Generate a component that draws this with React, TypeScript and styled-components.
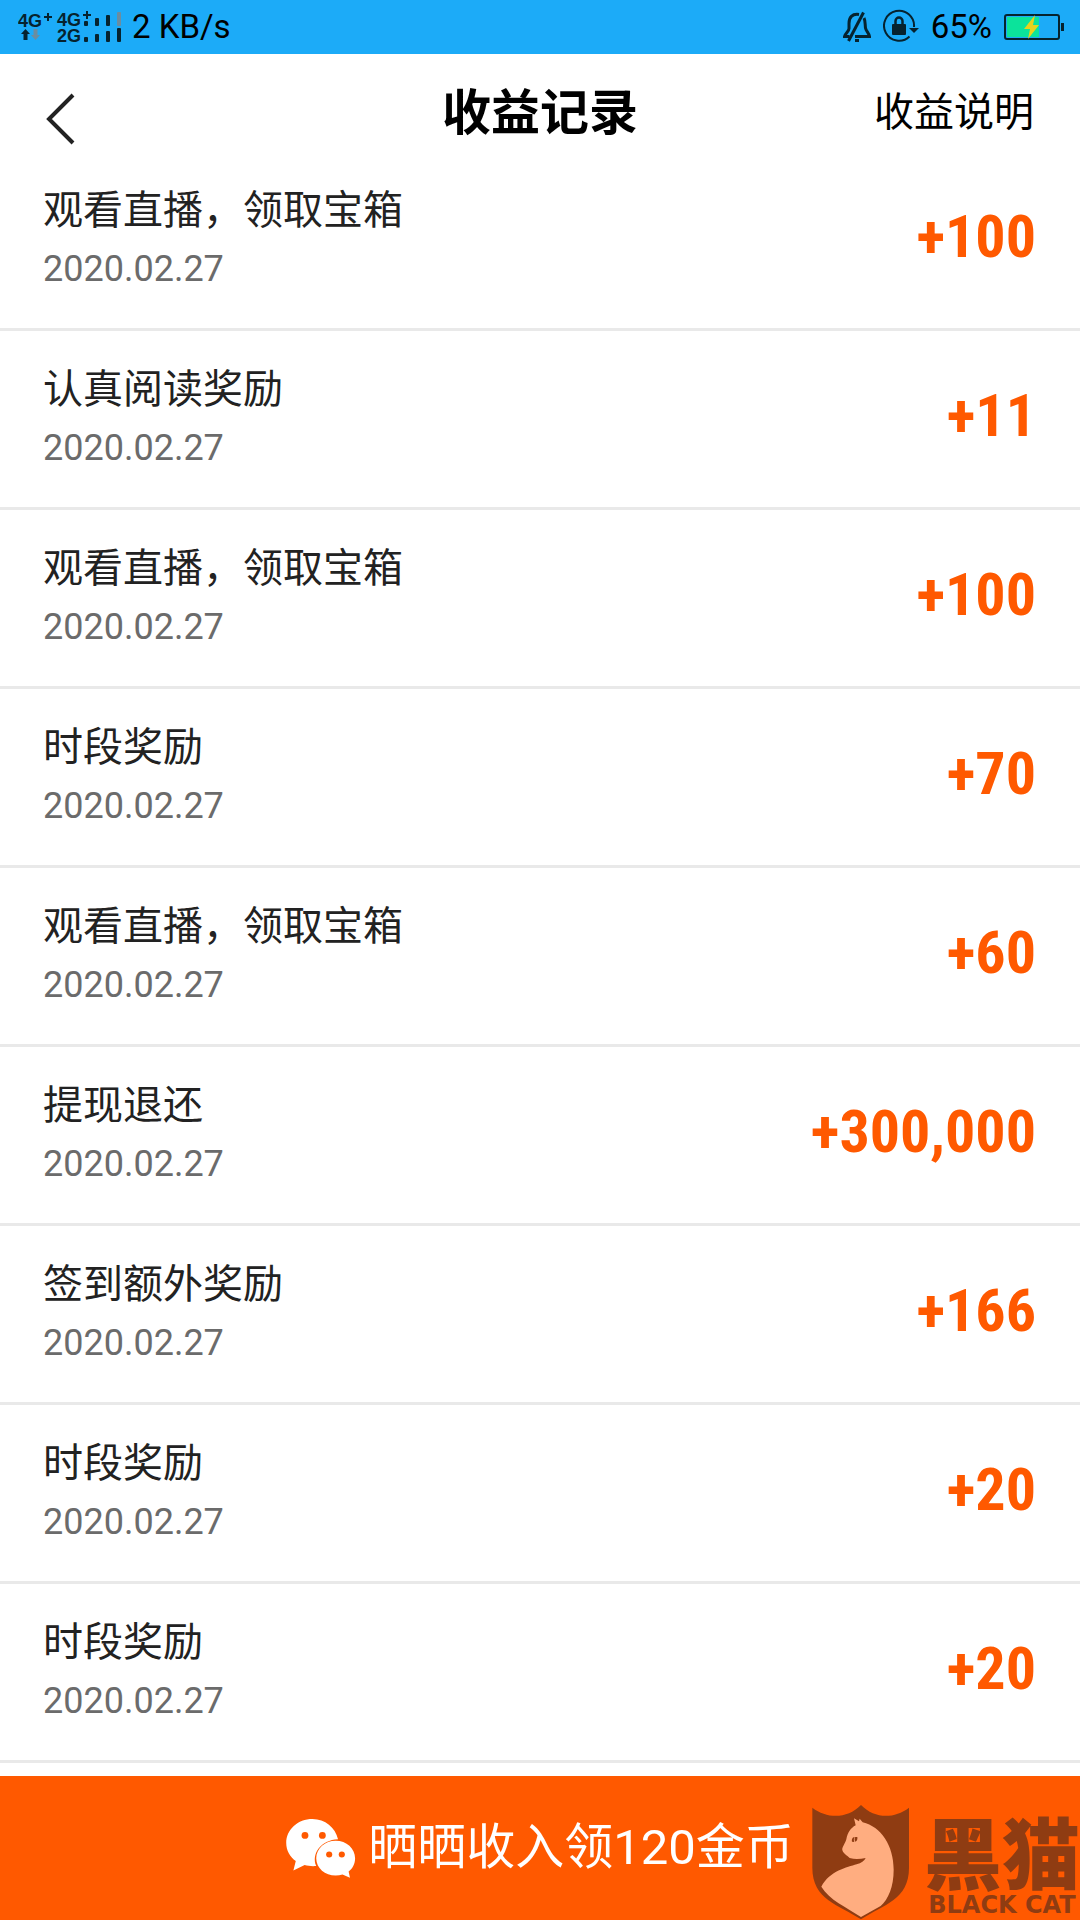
import React from "react";
import styled, { createGlobalStyle } from "styled-components";

const GlobalStyle = createGlobalStyle`
  * { box-sizing: border-box; }
  body {
    margin: 0;
    background: #fff;
    font-family: Roboto, "Noto Sans CJK SC", sans-serif;
  }
`;

const Page = styled.div`
  display: flex;
  flex-direction: column;
  min-height: 100vh;
`;

const StatusBar = styled.div`
  display: flex;
  align-items: center;
  justify-content: space-between;
  height: 54px;
  padding: 0 16px 0 18px;
  background: #1cabf8;
  color: #000;
  font-size: 33px;
  line-height: 56px;
`;

const StatusGroup = styled.div<{ $gap: number }>`
  display: flex;
  align-items: center;
  gap: ${(p) => p.$gap}px;

  svg {
    display: block;
    flex: none;
  }
`;

const Header = styled.header`
  display: grid;
  grid-template-columns: 1fr auto 1fr;
  align-items: center;
  height: 98px;
  padding: 22px 44px 0;
`;

const BackButton = styled.button`
  justify-self: start;
  padding: 10px 0 0;
  border: 0;
  background: none;

  svg {
    display: block;
  }
`;

const Title = styled.h1`
  margin: 0;
  color: #000;
  font-size: 49px;
  font-weight: 700;
  line-height: 72px;
`;

const HelpLink = styled.a`
  justify-self: end;
  padding: 0 2px 2px 0;
  color: #000;
  font-size: 40px;
  line-height: 60px;
  text-decoration: none;
`;

const Records = styled.ul`
  margin: 0;
  padding: 0;
  list-style: none;
`;

const Record = styled.li`
  display: flex;
  align-items: center;
  justify-content: space-between;
  padding: 31px 44px 37px 43px;
  border-bottom: 3px solid #e9e9e9;
`;

const RecordText = styled.div`
  display: flex;
  flex-direction: column;
  gap: 8px;
`;

const RecordName = styled.span`
  color: #222;
  font-size: 40px;
  line-height: 56px;
`;

const RecordDate = styled.time`
  color: #6b6b6b;
  font-size: 36px;
  line-height: 44px;
`;

const Amount = styled.span`
  color: #ff5900;
  font-family: "Roboto Condensed", "Liberation Sans Narrow", "Liberation Sans", sans-serif;
  font-size: 60px;
  font-weight: 700;
  line-height: 80px;
`;

const Footer = styled.footer`
  position: sticky;
  bottom: 0;
  margin-top: auto;
`;

const ShareButton = styled.button`
  display: flex;
  align-items: center;
  justify-content: center;
  gap: 12px;
  width: 100%;
  height: 144px;
  padding: 0;
  border: 0;
  background: #ff5900;
  color: #fff;
  font-family: inherit;
  font-size: 49px;
  line-height: 72px;
`;

const Watermark = styled.div`
  position: absolute;
  right: 0;
  bottom: 0;
  display: flex;
  align-items: flex-end;
  gap: 14px;
  color: #8f3c12;
  pointer-events: none;

  svg {
    display: block;
  }
`;

const Brand = styled.div`
  display: flex;
  flex-direction: column;
  align-items: center;
`;

const BrandName = styled.span`
  font-family: "Noto Sans CJK SC", sans-serif;
  font-size: 78px;
  font-weight: 900;
  line-height: 80px;
`;

const BrandLatin = styled.span`
  font-family: "DejaVu Sans", sans-serif;
  font-size: 24px;
  font-weight: 700;
  line-height: 30px;
  white-space: nowrap;
`;

const INK = "#06232f";
const FADED = "#6b8da0";

const SignalIcon = () => (
  <svg width="104" height="54" viewBox="18 0 104 54" fill={INK} aria-hidden="true">
    <g fontFamily="Liberation Sans, sans-serif" fontWeight="700" fontSize="18">
      <text x="18" y="27">4G</text>
      <text x="57" y="26">4G</text>
      <text x="57" y="42">2G</text>
    </g>
    <path d="M44 17h8M48 13v8M83 15h8M87 11v8" stroke={INK} strokeWidth="2" />
    <path d="M25.500 29l4.500 5h-2.500v6h-4v-6h-2.500z" />
    <path d="M35.500 40l-4.500-5h2.500v-6h4v6h2.500z" fill={FADED} />
    <rect x="84" y="21" width="4" height="5" rx="1" />
    <rect x="95" y="18" width="4" height="8" rx="1" />
    <rect x="106" y="15" width="4" height="11" rx="1" />
    <rect x="117" y="12" width="4" height="14" rx="1" fill={FADED} />
    <rect x="84" y="37" width="4" height="5" rx="1" />
    <rect x="95" y="34" width="4" height="8" rx="1" />
    <rect x="106" y="31" width="4" height="11" rx="1" />
    <rect x="117" y="28" width="4" height="14" rx="1" />
  </svg>
);

const MutedBellIcon = () => (
  <svg width="28" height="54" viewBox="43 0 28 54" fill="none" stroke={INK} strokeWidth="3" aria-hidden="true">
    <path d="M59 14.500c-7-1-10 3-10 9v5c0 3-4 5-4.500 8h5M64 18c1.500 3 1 7 1.500 10 .5 3 3.500 5 4 8.500H55" />
    <path d="M63.500 12.500L48.500 41" />
    <path d="M55 40.500h4" />
  </svg>
);

const RotationLockIcon = () => (
  <svg width="36" height="54" viewBox="84 0 36 54" fill="none" stroke={INK} aria-hidden="true">
    <path d="M110.500 36.500A15 15 0 1 1 115 27" strokeWidth="2" />
    <path d="M110 28h10l-5 5z" fill={INK} stroke="none" />
    <rect x="93" y="24" width="14" height="11" rx="1" fill={INK} stroke="none" />
    <path d="M96.500 25v-4a3.500 3.500 0 0 1 7 0v4" strokeWidth="2.500" />
  </svg>
);

const BatteryIcon = () => (
  <svg width="60" height="54" viewBox="204 0 60 54" aria-hidden="true">
    <rect x="207" y="17" width="32" height="20" fill="#0be39b" />
    <rect x="205" y="15" width="54" height="24" rx="2" fill="none" stroke={INK} strokeWidth="2" />
    <rect x="261" y="23" width="3" height="8" fill={INK} />
    <path d="M235 15l-11 14h6l-2 10 11-14h-6z" fill="#e8d21d" />
  </svg>
);

const BackIcon = () => (
  <svg width="34" height="52" viewBox="0 0 34 52" fill="none" stroke="#222" strokeWidth="4" aria-hidden="true">
    <path d="M29 2L5 26L29 50" />
  </svg>
);

const WeChatIcon = () => (
  <svg width="70" height="60" viewBox="80 209 204 176" fill="#fff" aria-hidden="true">
    <path d="M157 212c-43 0-77 31-77 70 0 22 11 41 28 53l-7 28 33-16c10 3 22 4 34 3-15-37 14-77 64-79-8-34-38-59-75-59z" />
    <path d="M225 276c-31 0-57 23-57 51 0 29 26 51 57 51 7 0 14-1 20-3l22 9-4-18c12-9 19-23 19-39 0-28-25-51-57-51z" />
    <g fill="#ff5900">
      <circle cx="135" cy="260" r="10" />
      <circle cx="186" cy="260" r="10" />
      <circle cx="206" cy="316" r="9" />
      <circle cx="243" cy="316" r="9" />
    </g>
  </svg>
);

const CatShieldIcon = () => (
  <svg width="98" height="115" viewBox="93 165 294 345" aria-hidden="true">
    <path d="M94 173c45 34 105 34 146-8 41 42 99 42 144 8v180c0 96-76 110-144 155C172 463 94 449 94 353z" fill="#8f3c12" />
    <path d="M219 205l15 9 2-8 9 11c55 13 93 70 93 142 0 52-16 88-39 109l-59 33c-45-31-94-50-119-91 26-48 77-58 106-67 14-4 23-10 27-19-16 3-31 5-48 0-8-8-20-14-22-24-2-7 8-18 12-32 4-20 13-34 28-42z" fill="#ffad80" />
    <g fill="#8f3c12">
      <path d="M213 275c-2-7 2-14 8-14-3 5-3 9-1 15z" />
      <path d="M223 275c-3-5-3-10 0-14h6c1 7-1 12-6 14z" />
    </g>
  </svg>
);

const records = [
  { name: "观看直播，领取宝箱", amount: "+100" },
  { name: "认真阅读奖励", amount: "+11" },
  { name: "观看直播，领取宝箱", amount: "+100" },
  { name: "时段奖励", amount: "+70" },
  { name: "观看直播，领取宝箱", amount: "+60" },
  { name: "提现退还", amount: "+300,000" },
  { name: "签到额外奖励", amount: "+166" },
  { name: "时段奖励", amount: "+20" },
  { name: "时段奖励", amount: "+20" },
];

export default function App() {
  return (
    <Page lang="zh-CN">
      <GlobalStyle />
      <StatusBar>
        <StatusGroup $gap={10}>
          <SignalIcon />
          <span>2 KB/s</span>
        </StatusGroup>
        <StatusGroup $gap={12}>
          <MutedBellIcon />
          <RotationLockIcon />
          <span>65%</span>
          <BatteryIcon />
        </StatusGroup>
      </StatusBar>
      <Header>
        <BackButton type="button" aria-label="返回">
          <BackIcon />
        </BackButton>
        <Title>收益记录</Title>
        <HelpLink href="#help">收益说明</HelpLink>
      </Header>
      <Records>
        {records.map((record, index) => (
          <Record key={index}>
            <RecordText>
              <RecordName>{record.name}</RecordName>
              <RecordDate dateTime="2020-02-27">2020.02.27</RecordDate>
            </RecordText>
            <Amount>{record.amount}</Amount>
          </Record>
        ))}
      </Records>
      <Footer>
        <ShareButton type="button">
          <WeChatIcon />
          晒晒收入领120金币
        </ShareButton>
        <Watermark>
          <CatShieldIcon />
          <Brand>
            <BrandName>黑猫</BrandName>
            <BrandLatin>BLACK CAT</BrandLatin>
          </Brand>
        </Watermark>
      </Footer>
    </Page>
  );
}
